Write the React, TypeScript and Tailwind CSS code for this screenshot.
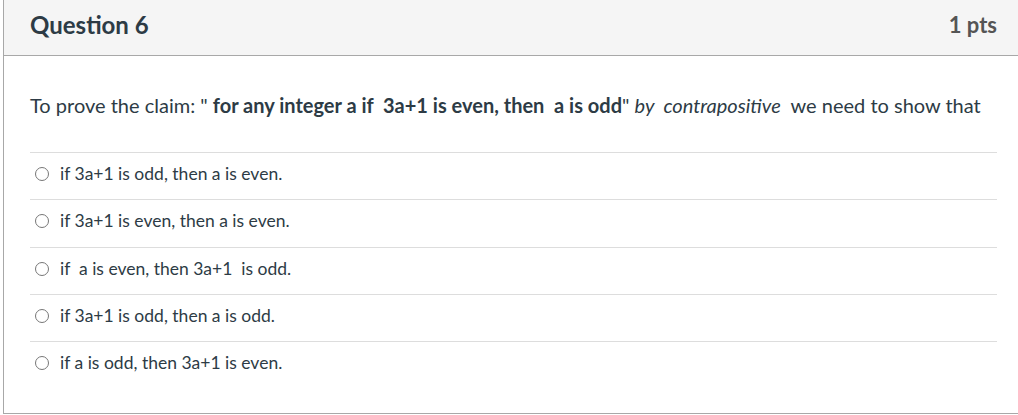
export default function App() {
  const options = [
    "if 3a+1 is odd, then a is even.",
    "if 3a+1 is even, then a is even.",
    "if\u00a0 a is even, then 3a+1\u00a0 is odd.",
    "if 3a+1 is odd, then a is odd.",
    "if a is odd, then 3a+1 is even.",
  ];

  return (
    <div className="w-[1018px] h-[415px] bg-white overflow-hidden font-['Lato','Noto_Sans',sans-serif] text-[#2d3b45]">
      <div className="ml-[3px] w-[1040px] border-l border-b border-[#a8a8a8]">
        {/* header */}
        <div className="h-[56px] bg-[#f5f5f5] border-b border-[#a8a8a8] flex items-center pl-[26px] w-[1015px] pr-[22px]">
          <h2 className="text-[24px] font-bold leading-none mt-[-6px] text-[#2d3b45]">Question 6</h2>
          <span className="ml-auto text-[22px] font-bold leading-none mt-[-6px] text-[#555]">1 pts</span>
        </div>

        {/* body */}
        <div className="pl-[26px] w-[993px] pt-[37px] pb-[25px]">
          <p className="text-[20px] leading-6">
            To prove the claim: "{" "}
            <strong>for any integer a if&nbsp; 3a+1 is even, then&nbsp; a is odd</strong>"{" "}
            <em>by&nbsp; contrapositive</em>&nbsp; we need to show that
          </p>

          <div className="mt-[35px]">
            {options.map((opt) => (
              <div key={opt} className="border-t border-[#ddd] h-[47.25px] pt-[9px] flex items-start">
                <div className="flex items-center h-6 pl-[5px]">
                  <span className="w-[14px] h-[14px] rounded-full border border-[#777] bg-white" />
                  <span className="ml-[11px] text-[17.5px] leading-6 text-[#2d3b45]">{opt}</span>
                </div>
              </div>
            ))}
          </div>
        </div>
      </div>
    </div>
  );
}
